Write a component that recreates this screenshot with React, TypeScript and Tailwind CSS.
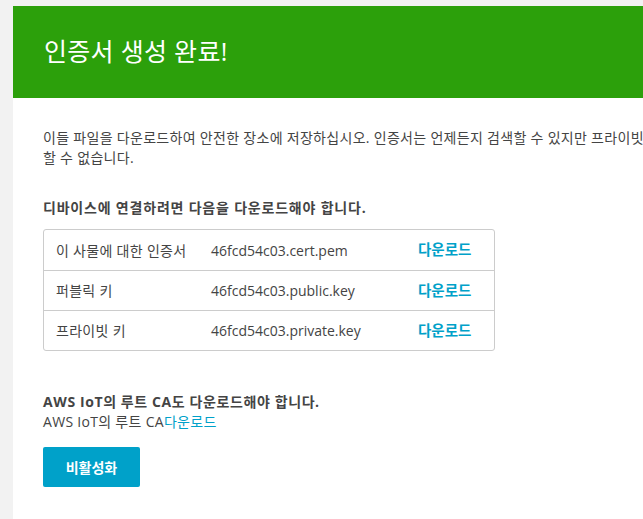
const FILES = [
  { label: '이 사물에 대한 인증서', name: '46fcd54c03.cert.pem' },
  { label: '퍼블릭 키', name: '46fcd54c03.public.key' },
  { label: '프라이빗 키', name: '46fcd54c03.private.key' },
];

export default function App() {
  return (
    <div
      className="min-h-screen overflow-hidden bg-[#f2f2f2] pt-[6px] pl-[13px] text-[#444]"
      style={{ fontFamily: '"Open Sans", "Noto Sans CJK KR", sans-serif' }}
    >
      <div className="w-[900px] bg-white pb-[40px]">
        <div className="flex h-[92px] items-center bg-[#2ca00b] pl-[31px]">
          <h1 className="text-[25px] tracking-[0.3px] text-white">인증서 생성 완료!</h1>
        </div>

        <div className="px-[30px] pt-[30px]">
          <p className="text-[14px] leading-[20px] tracking-[0.3px]">
            <span className="whitespace-nowrap">
              이들 파일을 다운로드하여 안전한 장소에 저장하십시오. 인증서는 언제든지 검색할 수 있지만 프라이빗 키는 다시 검색
            </span>
            <br />
            할 수 없습니다.
          </p>

          <h2 className="mt-[30px] text-[14px] font-bold leading-[20px] tracking-[0.8px]">
            디바이스에 연결하려면 다음을 다운로드해야 합니다.
          </h2>

          <div className="mt-[11px] w-[452px] rounded-[3px] border border-[#ccc]">
            {FILES.map((f, i) => (
              <div
                key={f.name}
                className={`flex h-[40px] items-center text-[14px] ${i > 0 ? 'border-t border-[#ccc]' : ''}`}
              >
                <div className="w-[167px] pl-[12px] tracking-[0.3px]">{f.label}</div>
                <div className="w-[207px]">{f.name}</div>
                <a className="cursor-pointer text-[14.5px] font-semibold text-[#00a1c9]">다운로드</a>
              </div>
            ))}
          </div>

          <h2 className="mt-[41px] text-[14px] font-bold leading-[20px] tracking-[0.6px]">
            AWS IoT의 루트 CA도 다운로드해야 합니다.
          </h2>
          <p className="text-[14px] leading-[20px] tracking-[0.3px]">
            AWS IoT의 루트 CA<a className="cursor-pointer text-[#00a1c9]">다운로드</a>
          </p>

          <button className="mt-[15px] h-[40px] w-[97px] rounded-[2px] bg-[#00a1c9] text-[14px] font-bold text-white">
            비활성화
          </button>
        </div>
      </div>
    </div>
  );
}
